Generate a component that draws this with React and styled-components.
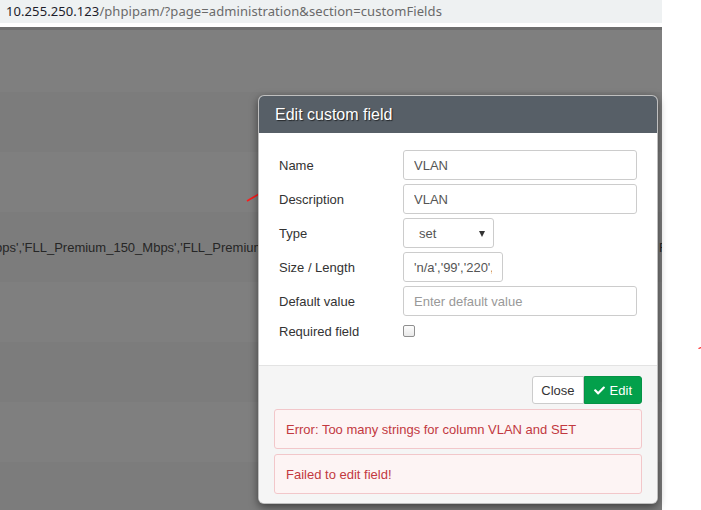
import React from 'react';
import styled, { createGlobalStyle } from 'styled-components';
import { FaCheck } from 'react-icons/fa';

const GlobalStyle = createGlobalStyle`
  html, body {
    margin: 0;
    padding: 0;
    background: #fff;
  }
  * {
    box-sizing: border-box;
  }
`;

const Screen = styled.div`
  position: relative;
  width: 701px;
  height: 510px;
  overflow: hidden;
  background: #fff;
  font-family: "Liberation Sans", Arial, sans-serif;
`;

const UrlBar = styled.div`
  width: 662px;
  height: 23px;
  padding-left: 6px;
  padding-bottom: 1px;
  display: flex;
  align-items: center;
  background: #eef1f2;
  font-family: "Noto Sans", "Open Sans", sans-serif;
  font-size: 13px;
  letter-spacing: 0.08px;
  color: #6a6a6a;
  white-space: nowrap;
`;

const Host = styled.span`
  color: #1d1d2b;
`;

const Backdrop = styled.div`
  margin-top: 4px;
  width: 662px;
  height: 483px;
  border-top: 3px solid #6e6e6e;
  display: flex;
  flex-direction: column;
  overflow: hidden;
`;

const Row = styled.div`
  flex: 0 0 ${p => p.$h}px;
  background: ${p => (p.$alt ? '#7c7c7c' : '#7f7f7f')};
  display: flex;
  align-items: center;
  justify-content: space-between;
  overflow: hidden;
  white-space: nowrap;
  font-size: 13px;
  color: #262626;
`;

const RowClip = styled.div`
  width: 258px;
  overflow: hidden;
`;

const RowText = styled.span`
  display: inline-block;
  margin-left: -5px;
`;

const RowTail = styled.span`
  margin-right: -5px;
`;

const Mark = styled.svg`
  position: absolute;
  left: ${p => p.$x}px;
  top: ${p => p.$y}px;
`;

const Modal = styled.div`
  position: absolute;
  left: 258px;
  top: 95px;
  width: 400px;
  border: 1px solid rgba(0, 0, 0, 0.25);
  border-radius: 6px;
  background: #fff;
  box-shadow: 0 3px 9px rgba(0, 0, 0, 0.5);
  overflow: hidden;
`;

const ModalHeader = styled.div`
  height: 37px;
  padding-left: 16px;
  display: flex;
  align-items: center;
  background: #575f67;
  color: #fff;
  font-size: 16px;
  text-shadow: 1px 1px 1px rgba(0, 0, 0, 0.6);
`;

const ModalBody = styled.div`
  padding: 17px 20px 23px 20px;
  display: flex;
  flex-direction: column;
  gap: 4px;
  border-bottom: 1px solid #e3e3e3;
`;

const FieldRow = styled.div`
  display: flex;
  align-items: center;
  min-height: ${p => p.$h || 30}px;
`;

const Label = styled.div`
  width: 124px;
  flex: none;
  font-size: 13px;
  color: #333;
`;

const TextInput = styled.input`
  width: ${p => p.$w || 234}px;
  height: 30px;
  padding: 0 10px;
  border: 1px solid #ccc;
  border-radius: 3px;
  font-family: "Liberation Sans", Arial, sans-serif;
  font-size: 13px;
  color: #555;
  background: #fff;
  outline: none;

  &::placeholder {
    color: #999;
  }
`;

const Select = styled.div`
  position: relative;
  width: 91px;
  height: 30px;
  padding-left: 15px;
  display: flex;
  align-items: center;
  border: 1px solid #ccc;
  border-radius: 3px;
  font-size: 13px;
  color: #555;
`;

const Caret = styled.span`
  position: absolute;
  right: 8px;
  top: 12px;
  width: 0;
  height: 0;
  border-left: 3.5px solid transparent;
  border-right: 3.5px solid transparent;
  border-top: 6px solid #333;
`;

const Checkbox = styled.span`
  width: 12px;
  height: 12px;
  border: 1px solid #8f8f8f;
  border-radius: 2px;
  background: linear-gradient(#fdfdfd, #e9e9e9);
`;

const ModalFooter = styled.div`
  padding: 10px 15px 9px 15px;
  background: #f5f5f5;
  display: flex;
  flex-direction: column;
  gap: 5px;
`;

const Buttons = styled.div`
  display: flex;
  justify-content: flex-end;
`;

const Button = styled.button`
  height: 28px;
  padding: 0 ${p => (p.$primary ? 9 : 8)}px;
  display: flex;
  align-items: center;
  gap: 5px;
  font-family: "Liberation Sans", Arial, sans-serif;
  font-size: 13px;
  border: 1px solid ${p => (p.$primary ? '#049346' : '#ccc')};
  background: ${p => (p.$primary ? '#03a04b' : '#fff')};
  color: ${p => (p.$primary ? '#fff' : '#333')};
  border-radius: ${p => (p.$primary ? '0 3px 3px 0' : '3px 0 0 3px')};
  cursor: pointer;

  svg {
    width: 11px;
    height: 11px;
  }
`;

const Alert = styled.div`
  height: 40px;
  padding-left: 11px;
  display: flex;
  align-items: center;
  border: 1px solid #f2c7ca;
  border-radius: 3px;
  background: #fdf4f4;
  color: #c2393f;
  font-size: 13px;
`;

const bands = [
  { h: 62 }, { h: 60, alt: true }, { h: 60 }, { h: 70, alt: true, text: true },
  { h: 60 }, { h: 60, alt: true }, { h: 60 }, { h: 51, alt: true },
];

export default function App() {
  return (
    <Screen>
      <GlobalStyle />
      <UrlBar>
        <Host>10.255.250.123</Host>/phpipam/?page=administration&amp;section=customFields
      </UrlBar>
      <Backdrop>
        {bands.map((b, i) => (
          <Row key={i} $h={b.h} $alt={b.alt}>
            {b.text && (
              <>
                <RowClip>
                  <RowText>bps','FLL_Premium_150_Mbps','FLL_Premium_200_Mbps'</RowText>
                </RowClip>
                <RowTail>F</RowTail>
              </>
            )}
          </Row>
        ))}
      </Backdrop>

      <Mark $x={246} $y={192} width="14" height="10">
        <path d="M1 9 L13 2" stroke="#ff1a1a" strokeWidth="1.6" fill="none" />
      </Mark>
      <Mark $x={698} $y={346} width="4" height="4">
        <path d="M0.5 2.5 L3.5 1.5" stroke="#ff1a1a" strokeWidth="1.2" fill="none" />
      </Mark>

      <Modal>
        <ModalHeader>Edit custom field</ModalHeader>
        <ModalBody>
          <FieldRow>
            <Label>Name</Label>
            <TextInput defaultValue="VLAN" />
          </FieldRow>
          <FieldRow>
            <Label>Description</Label>
            <TextInput defaultValue="VLAN" />
          </FieldRow>
          <FieldRow>
            <Label>Type</Label>
            <Select>
              set
              <Caret />
            </Select>
          </FieldRow>
          <FieldRow>
            <Label>Size / Length</Label>
            <TextInput $w={100} defaultValue="'n/a','99','220','250','300'" />
          </FieldRow>
          <FieldRow>
            <Label>Default value</Label>
            <TextInput placeholder="Enter default value" />
          </FieldRow>
          <FieldRow $h={22}>
            <Label>Required field</Label>
            <Checkbox />
          </FieldRow>
        </ModalBody>
        <ModalFooter>
          <Buttons>
            <Button>Close</Button>
            <Button $primary>
              <FaCheck /> Edit
            </Button>
          </Buttons>
          <Alert>Error: Too many strings for column VLAN and SET</Alert>
          <Alert>Failed to edit field!</Alert>
        </ModalFooter>
      </Modal>
    </Screen>
  );
}
